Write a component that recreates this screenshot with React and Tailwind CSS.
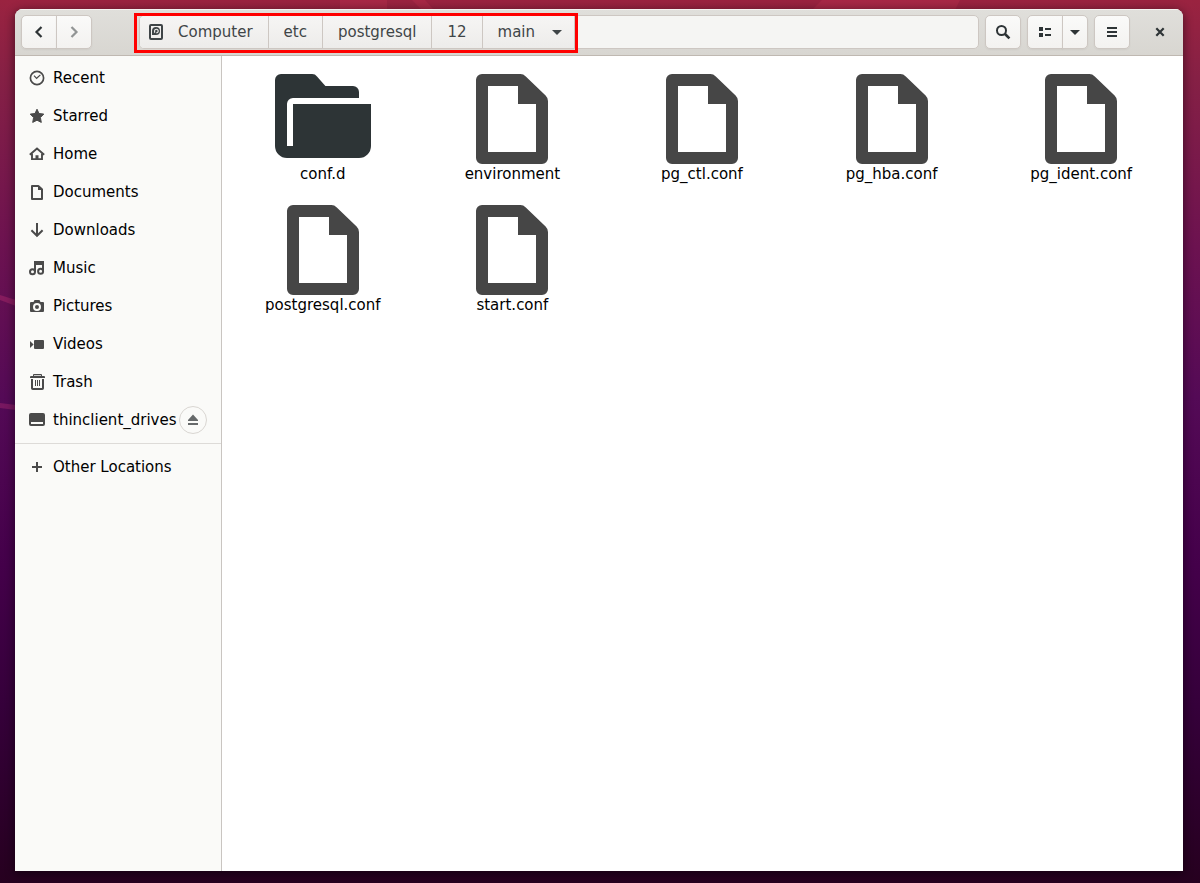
import React, { useState } from 'react';

const ICONS = {
  recent: (
    <>
      <circle cx="8" cy="8" r="6.6" fill="none" stroke="currentColor" strokeWidth="1.7" />
      <path d="M5 5.6 7.6 8.3 11.4 4.9" fill="none" stroke="currentColor" strokeWidth="1.2" />
    </>
  ),
  star: (
    <path
      d="M8 1.2 10 5.5 14.8 6.1 11.4 9.5 12.3 14.4 8 12.2 3.7 14.4 4.6 9.5 1.2 6.1 6 5.5Z"
      stroke="currentColor"
      strokeLinejoin="round"
    />
  ),
  home: (
    <>
      <path d="M0.8 8.7 8 2.6 15.2 8.7" fill="none" stroke="currentColor" strokeWidth="1.9" />
      <path d="M3 7.5V13.1H13V7.5" fill="none" stroke="currentColor" strokeWidth="1.9" />
      <path d="M6.5 13V9.2H9.5V13" />
    </>
  ),
  document: (
    <path
      fillRule="evenodd"
      d="M3 1H9.4Q9.9 1 10.3 1.4L13.6 4.6Q14 5 14 5.5V15A1 1 0 0 1 13 16H3A1 1 0 0 1 2 15V2A1 1 0 0 1 3 1ZM4 3V14H12V6H9V3Z"
    />
  ),
  download: <path d="M8 1V13.5M2.4 8.2 8 13.8 13.6 8.2" fill="none" stroke="currentColor" strokeWidth="2" />,
  music: (
    <>
      <path d="M6 12V2H14V11" fill="none" stroke="currentColor" strokeWidth="2" />
      <path d="M6 3H14V5H6Z" />
      <circle cx="3.5" cy="11.7" r="2.5" fill="none" stroke="currentColor" strokeWidth="2" />
      <circle cx="11.6" cy="11.2" r="2.5" fill="none" stroke="currentColor" strokeWidth="2" />
    </>
  ),
  camera: (
    <path
      fillRule="evenodd"
      d="M5.5 2H10.5L11.5 4H14A1 1 0 0 1 15 5V13A1 1 0 0 1 14 14H2A1 1 0 0 1 1 13V5A1 1 0 0 1 2 4H4.5ZM8 5A4 4 0 1 0 8 13A4 4 0 1 0 8 5ZM8 7A2 2 0 1 1 8 11A2 2 0 1 1 8 7Z"
    />
  ),
  video: (
    <path d="M6 4H14A1 1 0 0 1 15 5V12A1 1 0 0 1 14 13H6A1 1 0 0 1 5 12V5A1 1 0 0 1 6 4ZM1 5 4.6 8.5 1 12Z" />
  ),
  trash: (
    <>
      <path
        fillRule="evenodd"
        d="M5 0H12A1 1 0 0 1 13 1V2H15A1 1 0 0 1 16 3V4H1V3A1 1 0 0 1 2 2H4V1A1 1 0 0 1 5 0ZM5 1.2V2H12V1.2Z"
      />
      <path d="M3 5V14.2A0.8 0.8 0 0 0 3.8 15H13.2A0.8 0.8 0 0 0 14 14.2V5" fill="none" stroke="currentColor" strokeWidth="2" />
      <path d="M6.5 6V12M8.5 6V12M10.5 6V12" stroke="currentColor" strokeWidth="1" />
    </>
  ),
  drive: (
    <path
      fillRule="evenodd"
      d="M2 1H14A2 2 0 0 1 16 3V12A2 2 0 0 1 14 14H2A2 2 0 0 1 0 12V3A2 2 0 0 1 2 1ZM2 10V12H14V10Z"
    />
  ),
  plus: <path d="M3 8H13M8 3V13" stroke="currentColor" strokeWidth="2" />,
  eject: <path d="M8 2.5 13 8V9H3V8ZM3 11H13V13H3Z" />,
  folder: (
    <path d="M1 1H6.2A1 1 0 0 1 7 1.4L8.4 3H13A1 1 0 0 1 14 4V5H3A1 1 0 0 0 2 6V13H3V6H16V13A2 2 0 0 1 14 15H2A2 2 0 0 1 0 13V2A1 1 0 0 1 1 1Z" />
  ),
  disk: (
    <>
      <rect x="2" y="1" width="12" height="14" rx="1" fill="none" stroke="currentColor" strokeWidth="2" />
      <path d="M4 11V7A4 4 0 1 1 8 11Z" />
      <path d="M6.6 8.8V7A1.8 1.8 0 1 1 8.2 8.8" fill="none" stroke="#f2f1ef" strokeWidth="1.1" />
    </>
  ),
  back: <path d="M10.5 3 5.5 8 10.5 13" fill="none" stroke="currentColor" strokeWidth="2.2" />,
  forward: <path d="M5.5 3 10.5 8 5.5 13" fill="none" stroke="currentColor" strokeWidth="2.2" />,
  search: (
    <>
      <circle cx="6.5" cy="6.5" r="4.5" fill="none" stroke="currentColor" strokeWidth="2" />
      <path d="M10 10 14.4 14.4" stroke="currentColor" strokeWidth="2.6" />
    </>
  ),
  list: <path d="M2 3H6V7H2ZM2 9H6V13H2ZM8 4H14V6H8ZM8 10H14V12H8Z" />,
  down: <path d="M3 6H13L8 11Z" />,
  menu: <path d="M3 3H13V5H3ZM3 7H13V9H3ZM3 11H13V13H3Z" />,
  close: <path d="M4.3 4.3 11.7 11.7M11.7 4.3 4.3 11.7" stroke="currentColor" strokeWidth="2.2" />,
};

const Icon = ({ name, className = 'w-4 h-4' }) => (
  <svg viewBox="0 0 16 16" fill="currentColor" className={`shrink-0 ${className}`} aria-hidden="true">
    {ICONS[name]}
  </svg>
);

const places = [
  { icon: 'recent', label: 'Recent' },
  { icon: 'star', label: 'Starred' },
  { icon: 'home', label: 'Home' },
  { icon: 'document', label: 'Documents' },
  { icon: 'download', label: 'Downloads' },
  { icon: 'music', label: 'Music' },
  { icon: 'camera', label: 'Pictures' },
  { icon: 'video', label: 'Videos' },
  { icon: 'trash', label: 'Trash' },
  { icon: 'drive', label: 'thinclient_drives', ejectable: true },
];

const files = [
  { name: 'conf.d', folder: true },
  { name: 'environment' },
  { name: 'pg_ctl.conf' },
  { name: 'pg_hba.conf' },
  { name: 'pg_ident.conf' },
  { name: 'postgresql.conf' },
  { name: 'start.conf' },
];

const path = ['Computer', 'etc', 'postgresql', '12', 'main'];

const Wallpaper = () => (
  <svg
    className="absolute inset-0 w-full h-full"
    viewBox="0 0 1200 883"
    preserveAspectRatio="none"
    aria-hidden="true"
  >
    <g fill="#ff4a6a" fillOpacity="0.13">
      <path d="M340 0H387V10H340Z" />
      <path d="M412 0H425L434 10H422Z" />
      <path d="M822 0H960L955 10H812Z" />
    </g>
    <g fill="#ff4a8a" fillOpacity="0.22">
      <path d="M0 295 16 300V306L0 300Z" />
      <path d="M0 403 16 405V410L0 408Z" />
    </g>
  </svg>
);

const HeaderButton = ({ icon, label, className = '', ...rest }) => (
  <button
    type="button"
    aria-label={label}
    className={`flex items-center justify-center h-[34px] border border-[#cdc7c2] bg-linear-to-b from-[#fafaf9] to-[#f3f2f0] text-[#2e3436] shadow-xs ${className}`}
    {...rest}
  >
    <Icon name={icon} />
  </button>
);

const PathBar = () => (
  <div className="flex flex-1 h-[34px] rounded-[5px] border border-[#cdc7c2] bg-[#f5f5f3] ml-[47px]">
    <nav aria-label="Path" className="relative flex">
      {path.map((part, i) => (
        <button
          key={part}
          type="button"
          className={`flex items-center border-r border-[#cdc7c2] bg-linear-to-b from-[#f6f5f4] to-[#edecea] text-[#3f4547] ${
            i === 0 ? 'rounded-l-[4px] pl-2' : 'pl-[15px]'
          } ${i === path.length - 1 ? 'pr-[9px]' : 'pr-[15px]'}`}
        >
          {i === 0 && <Icon name="disk" className="w-4 h-4 mr-[14px]" />}
          {part}
          {i === path.length - 1 && <Icon name="down" className="w-4 h-4 ml-[14px]" />}
        </button>
      ))}
      <span className="absolute -left-[6px] -right-[3px] -top-[3px] -bottom-[5px] border-3 border-[#ff0000] pointer-events-none" />
    </nav>
  </div>
);

const PlaceLink = ({ icon, label, ejectable }) => (
  <li className="flex items-center h-[38px] px-[14px]">
    <a href="#" className="flex items-center gap-2 text-black">
      <Icon name={icon} className="w-4 h-4 text-[#4a4a4a]" />
      {label}
    </a>
    {ejectable && (
      <button
        type="button"
        aria-label="Eject"
        className="flex items-center justify-center w-7 h-7 ml-auto rounded-full border border-[#d9d6d2] text-[#66696a]"
      >
        <Icon name="eject" />
      </button>
    )}
  </li>
);

const App = () => {
  const [selected, setSelected] = useState(null);

  return (
    <div className="relative min-h-screen flex pt-[9px] pl-[15px] pr-[17px] pb-3 bg-[linear-gradient(to_bottom,#9a2340_0%,#852045_9%,#6c1250_28%,#540a56_45%,#44004a_64%,#35003a_80%,#26001f_100%)] font-['DejaVu_Sans',sans-serif] text-[15px] leading-5">
      <Wallpaper />
      <div className="relative flex-1 flex flex-col rounded-t-lg overflow-hidden bg-white shadow-[0_2px_10px_1px_rgba(0,0,0,0.45)]">
        <header className="flex items-center h-[47px] pl-[6px] pr-[5px] border-b border-[#bfb8b1] bg-linear-to-b from-[#e0dfdb] to-[#d8d6d1] shadow-[inset_0_1px_#f4f3f1]">
          <div className="flex">
            <HeaderButton icon="back" label="Back" className="w-9 rounded-l-[5px]" />
            <HeaderButton
              icon="forward"
              label="Forward"
              className="w-9 -ml-px rounded-r-[5px] disabled:text-[#929595]"
              disabled
            />
          </div>
          <PathBar />
          <div className="flex gap-[6px] ml-[6px]">
            <HeaderButton icon="search" label="Search" className="w-9 rounded-[5px]" />
            <div className="flex">
              <HeaderButton icon="list" label="List view" className="w-9 rounded-l-[5px]" />
              <HeaderButton icon="down" label="View options" className="w-[26px] -ml-px rounded-r-[5px]" />
            </div>
            <HeaderButton icon="menu" label="Menu" className="w-9 rounded-[5px]" />
          </div>
          <button
            type="button"
            aria-label="Close"
            className="flex items-center justify-center w-9 h-[34px] ml-3 text-[#2e3436]"
          >
            <Icon name="close" />
          </button>
        </header>

        <div className="flex flex-1">
          <aside className="w-[207px] shrink-0 border-r border-[#c9c5c1] bg-[#fafaf8]">
            <ul className="pt-[3px] pb-1 border-b border-[#dddbd8]">
              {places.map((p) => (
                <PlaceLink key={p.label} {...p} />
              ))}
            </ul>
            <ul className="pt-1">
              <PlaceLink icon="plus" label="Other Locations" />
            </ul>
          </aside>

          <main className="flex-1 pt-3 pl-[6px] pr-[7px]">
            <div className="grid grid-cols-[repeat(auto-fill,minmax(180px,1fr))] gap-y-[15px]">
              {files.map((f) => (
                <button
                  key={f.name}
                  type="button"
                  onClick={() => setSelected(f.name)}
                  aria-pressed={selected === f.name}
                  className="flex flex-col items-center text-black"
                >
                  <Icon
                    name={f.folder ? 'folder' : 'document'}
                    className={f.folder ? 'w-24 h-24 text-[#2d3436]' : 'w-24 h-24 text-[#464646]'}
                  />
                  {f.name}
                </button>
              ))}
            </div>
          </main>
        </div>
      </div>
    </div>
  );
};

export default App;
